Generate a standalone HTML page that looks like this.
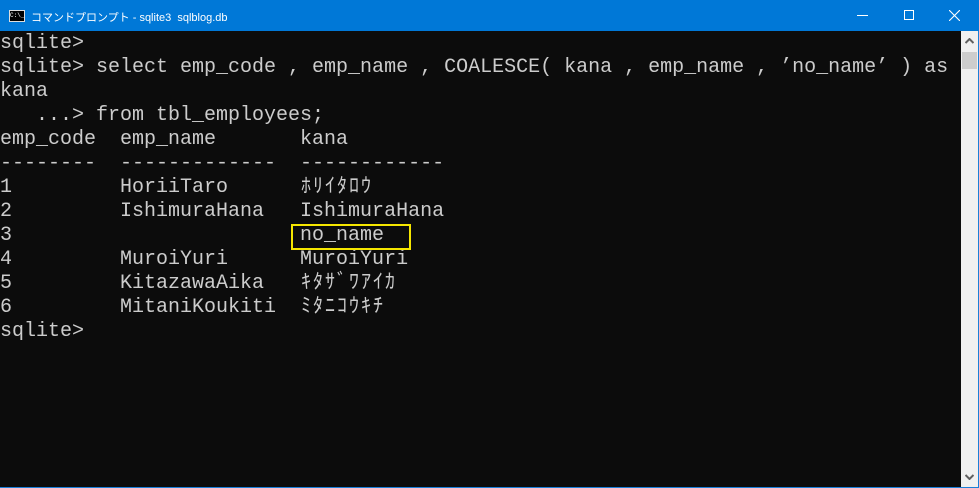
<!DOCTYPE html>
<html><head><meta charset="utf-8"><style>
html,body{margin:0;padding:0;width:979px;height:488px;overflow:hidden;background:#0c0c0c}
#title{position:absolute;left:0;top:0;width:979px;height:31px;background:#0078d7;color:#fff;font:11px "Liberation Sans","Noto Sans CJK JP",sans-serif}
#title .t{position:absolute;left:31px;top:9px;}
#ico{position:absolute;left:9px;top:10px;width:14px;height:10px;background:#000;border:1px solid #ddd;color:#fff;font:6px "Liberation Mono",monospace;line-height:10px;text-align:center}
.ctl{position:absolute;top:0;height:31px;width:46px;color:#fff;text-align:center}
#term{position:absolute;left:0;top:32px;width:961px;height:455px;background:#0c0c0c;color:#cccccc;font:20px/24px "Liberation Mono","Noto Sans CJK JP",monospace;white-space:pre}
.l{position:absolute;left:0;height:24px}
.k span{display:inline-block;width:12px;text-align:center}
#sb{position:absolute;left:961px;top:31px;width:17px;height:456px;background:#f0f0f0}
#thumb{position:absolute;left:1px;top:21px;width:15px;height:17px;background:#cdcdcd}
#box{position:absolute;left:291px;top:224px;width:116px;height:22px;border:2px solid #f5e600}
#rb{position:absolute;left:978px;top:31px;width:1px;height:457px;background:#1a7fd8}
#bb{position:absolute;left:0;top:487px;width:979px;height:1px;background:#1a7fd8}
</style></head><body>
<div id="title"><div id="ico">C:\_</div><div class="t">コマンドプロンプト - sqlite3&nbsp; sqlblog.db</div>
<div class="ctl" style="left:840px"><div style="position:absolute;left:17px;top:15px;width:11px;height:1px;background:#fff"></div></div>
<div class="ctl" style="left:886px"><div style="position:absolute;left:18px;top:10px;width:8px;height:8px;border:1px solid #fff"></div></div>
<div class="ctl" style="left:932px"><svg style="position:absolute;left:17px;top:10px" width="11" height="11"><path d="M0 0L11 11M11 0L0 11" stroke="#fff" stroke-width="1.1"/></svg></div>
</div>
<div id="term">
<div class="l" style="top:0">sqlite&gt;</div>
<div class="l" style="top:24px">sqlite&gt; select emp_code , emp_name , COALESCE( kana , emp_name , ’no_name’ ) as</div>
<div class="l" style="top:48px">kana</div>
<div class="l" style="top:72px">   ...&gt; from tbl_employees;</div>
<div class="l" style="top:96px">emp_code  emp_name       kana</div>
<div class="l" style="top:120px">--------  -------------  ------------</div>
<div class="l" style="top:144px">1         HoriiTaro</div>
<div class="l k" style="top:144px;left:300px"><span>ﾎ</span><span>ﾘ</span><span>ｲ</span><span>ﾀ</span><span>ﾛ</span><span>ｳ</span></div>
<div class="l" style="top:168px">2         IshimuraHana   IshimuraHana</div>
<div class="l" style="top:192px">3                        no_name</div>
<div class="l" style="top:216px">4         MuroiYuri      MuroiYuri</div>
<div class="l" style="top:240px">5         KitazawaAika</div>
<div class="l k" style="top:240px;left:300px"><span>ｷ</span><span>ﾀ</span><span>ｻ</span><span>ﾞ</span><span>ﾜ</span><span>ｱ</span><span>ｲ</span><span>ｶ</span></div>
<div class="l" style="top:264px">6         MitaniKoukiti</div>
<div class="l k" style="top:264px;left:300px"><span>ﾐ</span><span>ﾀ</span><span>ﾆ</span><span>ｺ</span><span>ｳ</span><span>ｷ</span><span>ﾁ</span></div>
<div class="l" style="top:288px">sqlite&gt;</div>
</div>
<div id="box"></div>
<div id="sb"><div id="thumb"></div>
<svg style="position:absolute;left:4px;top:7px" width="9" height="6"><path d="M0.5 5L4.5 1L8.5 5" stroke="#606060" stroke-width="2" fill="none"/></svg>
<svg style="position:absolute;left:4px;top:443px" width="9" height="6"><path d="M0.5 1L4.5 5L8.5 1" stroke="#606060" stroke-width="2" fill="none"/></svg>
</div>
<div id="rb"></div><div id="bb"></div>
</body></html>
